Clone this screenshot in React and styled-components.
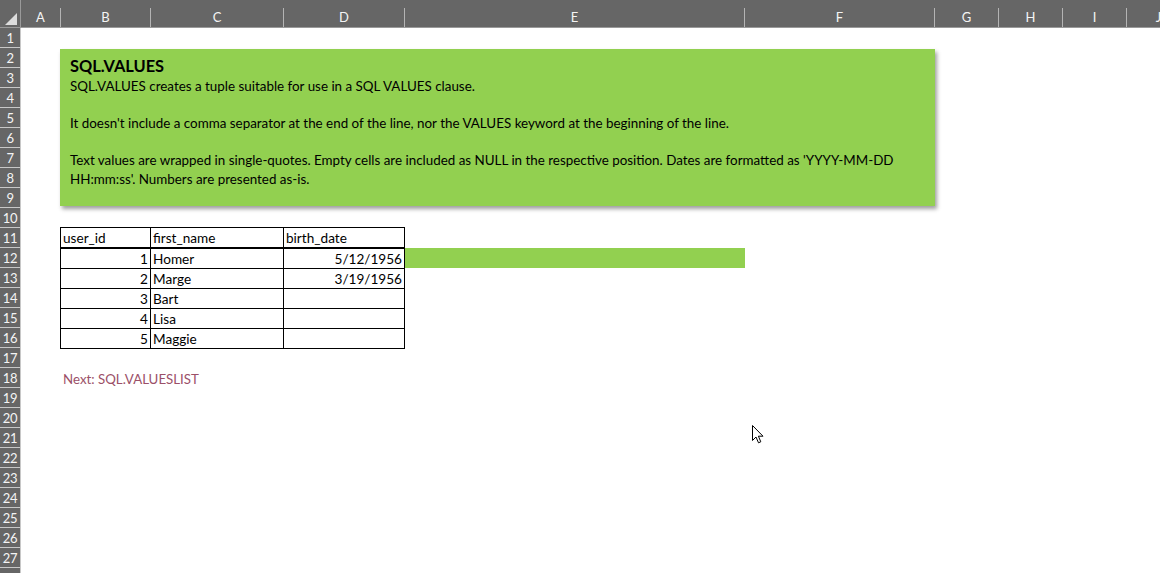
import React from "react";
import styled, { createGlobalStyle } from "styled-components";

const Global = createGlobalStyle`
  html, body { margin: 0; padding: 0; background: #fff; }
  body { font-family: Lato, "Liberation Sans", sans-serif; }
`;

const COLS = [
  { l: "A", w: 40 },
  { l: "B", w: 90 },
  { l: "C", w: 133 },
  { l: "D", w: 121 },
  { l: "E", w: 340 },
  { l: "F", w: 190 },
  { l: "G", w: 64 },
  { l: "H", w: 64 },
  { l: "I", w: 64 },
  { l: "J", w: 64 },
];

const ROWS = 28;
const LABELLED_ROWS = 27;

const Sheet = styled.div`
  position: relative;
  width: 1160px;
  height: 573px;
  overflow: hidden;
  display: grid;
  grid-template-columns: 21px ${COLS.map((c) => c.w + "px").join(" ")};
  grid-template-rows: 28px repeat(${ROWS}, 20px);
  background: #fff;
  font-family: Lato, "Liberation Sans", sans-serif;
`;

const Corner = styled.div`
  grid-column: 1;
  grid-row: 1;
  background: #666666;
  border-bottom: 1px solid #9a9a9a;
  border-right: 1px solid #9a9a9a;
  box-sizing: border-box;
  position: relative;
`;

const CornerTri = styled.svg`
  position: absolute;
  left: 0;
  top: 0;
`;

const HeaderCell = styled.div`
  grid-row: 1;
  grid-column: ${(p) => p.$col};
  background: #666666;
  border-bottom: 1px solid #9a9a9a;
  box-sizing: border-box;
  display: flex;
  padding-top: 8px;
`;

const HeaderLabel = styled.div`
  flex: 1;
  border-right: 1px solid #b4b4b4;
  color: #f4f4f4;
  font-size: 13px;
  display: flex;
  align-items: center;
  justify-content: center;
  padding-bottom: 1px;
`;

const RowHeader = styled.div`
  grid-column: 1;
  grid-row: ${(p) => p.$row};
  background: #666666;
  color: #f4f4f4;
  font-size: 13px;
  border-bottom: 1px solid #c8c8c8;
  border-right: 1px solid #c8c8c8;
  box-sizing: border-box;
  display: flex;
  align-items: center;
  justify-content: center;
  letter-spacing: -0.3px;
`;

const NoteBox = styled.div`
  grid-column: 3 / 8;
  grid-row: 3 / 11;
  margin: 1px 0 2px -1px;
  background: #92d050;
  box-shadow: 2px 3px 4px rgba(0, 0, 0, 0.38);
  padding: 6px 10px 0 10px;
  color: #000;
  z-index: 1;
`;

const NoteTitle = styled.div`
  font-weight: 700;
  font-size: 16.4px;
  line-height: 22px;
`;

const NoteText = styled.div`
  font-size: 13.4px;
  line-height: 18.5px;
  white-space: pre-line;
`;

const DataTable = styled.div`
  grid-column: 3 / 6;
  grid-row: 12 / 18;
  margin: -1px 0 0 -1px;
  width: 345px;
  height: 122px;
  align-self: start;
  display: grid;
  grid-template-columns: 91px 133px 121px;
  grid-template-rows: 22px repeat(5, 20px);
  font-size: 13.6px;
  color: #000;
`;

const TCell = styled.div`
  box-sizing: border-box;
  border-right: 1px solid #000;
  border-bottom: ${(p) => (p.$head ? "2px" : "1px")} solid #000;
  border-top: ${(p) => (p.$head ? "1px solid #000" : "none")};
  border-left: ${(p) => (p.$first ? "1px solid #000" : "none")};
  display: flex;
  align-items: center;
  justify-content: ${(p) => (p.$right ? "flex-end" : "flex-start")};
  padding: ${(p) => (p.$head ? "1px 2px 0 2px" : "0 2px 0 2px")};
  white-space: nowrap;
  overflow: hidden;
`;

const FillCell = styled.div`
  grid-column: 6;
  grid-row: 13;
  background: #92d050;
`;

const NextLink = styled.div`
  grid-column: 3 / 6;
  grid-row: 19;
  display: flex;
  align-items: center;
  padding-left: 2px;
  padding-top: 2px;
  font-size: 13.3px;
  color: #9b5068;
  white-space: nowrap;
`;

const Cursor = styled.svg`
  position: absolute;
  left: 751px;
  top: 424px;
  z-index: 5;
`;

const people = [
  [1, "Homer", "5/12/1956"],
  [2, "Marge", "3/19/1956"],
  [3, "Bart", ""],
  [4, "Lisa", ""],
  [5, "Maggie", ""],
];

export default function App() {
  return (
    <>
      <Global />
      <Sheet>
        <Corner>
          <CornerTri width="20" height="27" viewBox="0 0 20 27">
            <polygon points="5,25 17,25 17,13" fill="#dcdcdc" />
          </CornerTri>
        </Corner>
        {COLS.map((c, i) => (
          <HeaderCell key={c.l} $col={i + 2}>
            <HeaderLabel>{c.l}</HeaderLabel>
          </HeaderCell>
        ))}
        {Array.from({ length: ROWS }, (_, i) => (
          <RowHeader key={i} $row={i + 2}>
            {i < LABELLED_ROWS ? i + 1 : null}
          </RowHeader>
        ))}

        <NoteBox>
          <NoteTitle>SQL.VALUES</NoteTitle>
          <NoteText>
            {"SQL.VALUES creates a tuple suitable for use in a SQL VALUES clause.\n\nIt doesn't include a comma separator at the end of the line, nor the VALUES keyword at the beginning of the line.\n\nText values are wrapped in single-quotes. Empty cells are included as NULL in the respective position. Dates are formatted as 'YYYY-MM-DD\nHH:mm:ss'. Numbers are presented as-is."}
          </NoteText>
        </NoteBox>

        <DataTable>
          <TCell $head $first>user_id</TCell>
          <TCell $head>first_name</TCell>
          <TCell $head>birth_date</TCell>
          {people.map(([id, name, date]) => (
            <React.Fragment key={id}>
              <TCell $first $right>{id}</TCell>
              <TCell>{name}</TCell>
              <TCell $right>{date}</TCell>
            </React.Fragment>
          ))}
        </DataTable>

        <FillCell />

        <NextLink>Next: SQL.VALUESLIST</NextLink>

        <Cursor width="14" height="21" viewBox="0 0 14 21">
          <path
            d="M1.5 1.5 L1.5 16.5 L5 13 L7.5 18.8 L9.8 17.8 L7.4 12.2 L12 12.2 Z"
            fill="#fff"
            stroke="#000"
            strokeWidth="1"
            strokeLinejoin="miter"
          />
        </Cursor>
      </Sheet>
    </>
  );
}
